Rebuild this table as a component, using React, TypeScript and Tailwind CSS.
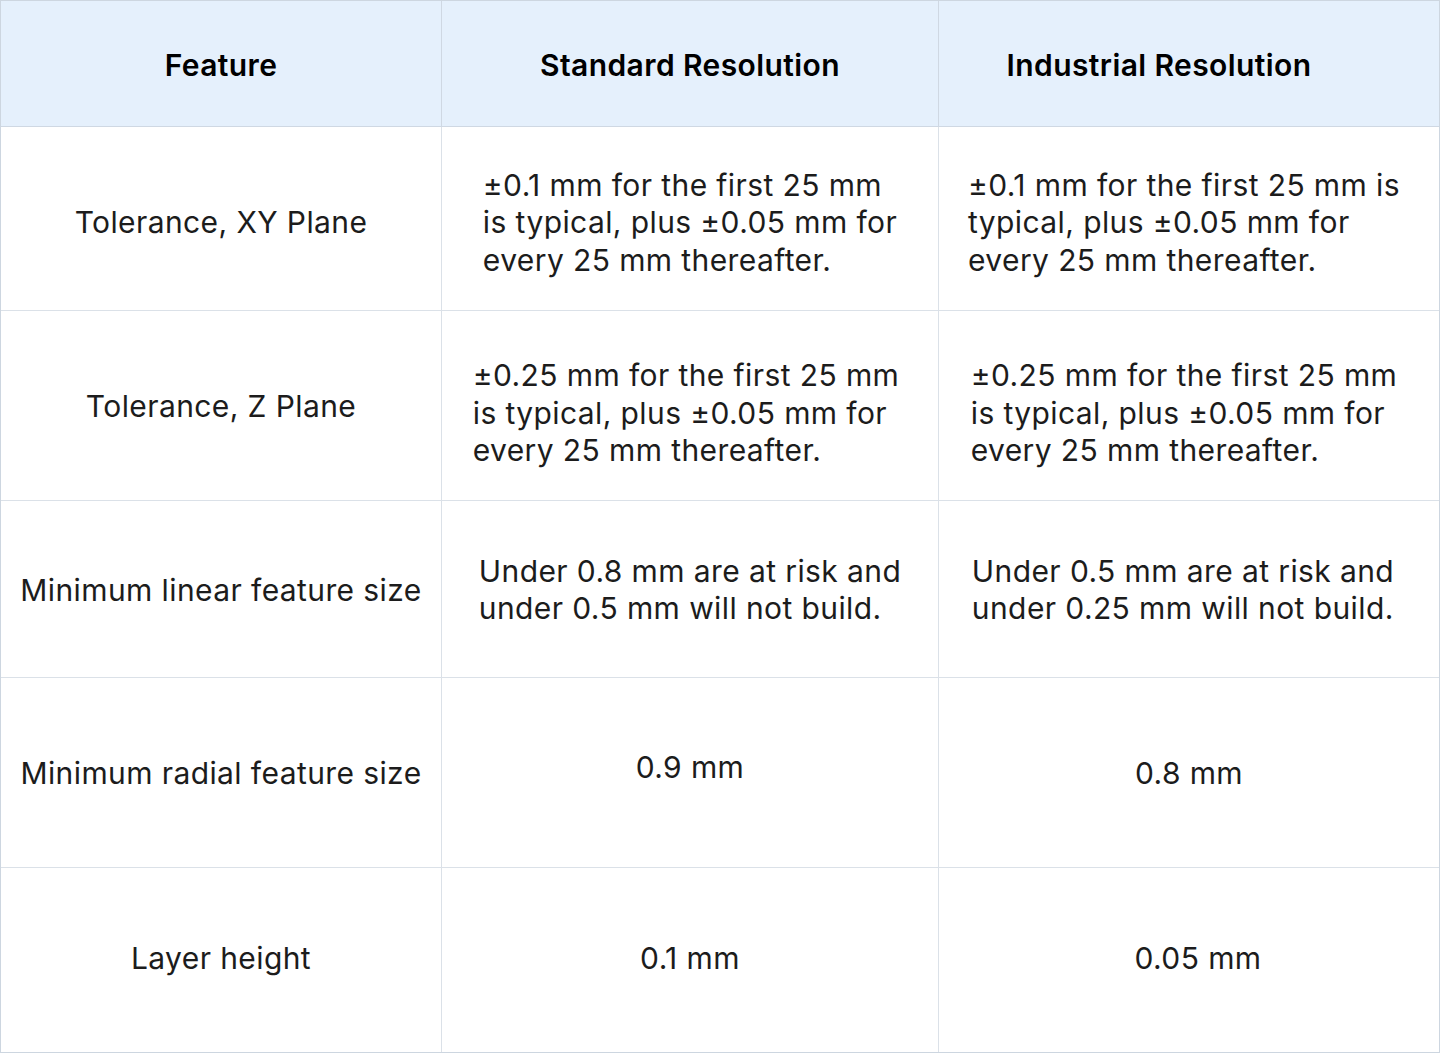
import React from "react"

type Cell = { lines: string[]; cls: string }
type Row = { feature: Cell; standard: Cell; industrial: Cell; height: string }

const rows: Row[] = [
  {
    feature: { lines: ["Tolerance, XY Plane"], cls: "pt-[8px]" },
    standard: {
      lines: ["±0.1 mm for the first 25 mm", "is typical, plus ±0.05 mm for", "every 25 mm thereafter."],
      cls: "pt-[9px]",
    },
    industrial: {
      lines: ["±0.1 mm for the first 25 mm is", "typical, plus ±0.05 mm for", "every 25 mm thereafter."],
      cls: "pt-[9px] pr-[10px]",
    },
    height: "h-[184px]",
  },
  {
    feature: { lines: ["Tolerance, Z Plane"], cls: "pt-[2px]" },
    standard: {
      lines: ["±0.25 mm for the first 25 mm", "is typical, plus ±0.05 mm for", "every 25 mm thereafter."],
      cls: "pt-[16px] pr-[8px]",
    },
    industrial: {
      lines: ["±0.25 mm for the first 25 mm", "is typical, plus ±0.05 mm for", "every 25 mm thereafter."],
      cls: "pt-[16px] pr-[10px]",
    },
    height: "h-[190px]",
  },
  {
    feature: { lines: ["Minimum linear feature size"], cls: "pt-[4px]" },
    standard: { lines: ["Under 0.8 mm are at risk and", "under 0.5 mm will not build."], cls: "pt-[2px]" },
    industrial: { lines: ["Under 0.5 mm are at risk and", "under 0.25 mm will not build."], cls: "pt-[2px] pr-[12px]" },
    height: "h-[177px]",
  },
  {
    feature: { lines: ["Minimum radial feature size"], cls: "pt-[2px]" },
    standard: { lines: ["0.9 mm"], cls: "pb-[10px]" },
    industrial: { lines: ["0.8 mm"], cls: "pt-[2px]" },
    height: "h-[190px]",
  },
  {
    feature: { lines: ["Layer height"], cls: "pb-[2px]" },
    standard: { lines: ["0.1 mm"], cls: "pb-[2px]" },
    industrial: { lines: ["0.05 mm"], cls: "pb-[2px] pl-[18px]" },
    height: "h-[184px]",
  },
]

function Lines({ lines }: { lines: string[] }) {
  return (
    <div className="text-left">
      {lines.map((l, i) => (
        <div key={i} className="whitespace-nowrap">
          {l}
        </div>
      ))}
    </div>
  )
}

export default function App() {
  return (
    <div
      className="w-[1440px] h-[1053px] bg-white text-[#1c1c1c]"
      style={{ fontFamily: "Inter, 'Noto Sans', sans-serif" }}
    >
      <div className="border-[1.5px] border-[#cdd6e0] w-full h-full overflow-hidden">
        <div className="grid grid-cols-[441px_497px_1fr] h-[126px] bg-[#e5f0fc] border-b border-[#cfd8e3] text-[30px] tracking-[0.4px] font-semibold text-black">
          <div className="flex items-center justify-center border-r border-[#cfd8e3] pt-[4px]">Feature</div>
          <div className="flex items-center justify-center border-r border-[#cfd8e3] pt-[4px]">Standard Resolution</div>
          <div className="flex items-center justify-center pt-[4px] pr-[60px]">Industrial Resolution</div>
        </div>
        {rows.map((r, i) => (
          <div
            key={i}
            className={`grid grid-cols-[441px_497px_1fr] ${r.height} ${
              i < rows.length - 1 ? "border-b border-[#dbe1e8]" : ""
            } text-[30px] tracking-[0.4px] leading-[37.5px]`}
          >
            <div className={`flex items-center justify-center border-r border-[#dbe1e8] ${r.feature.cls}`}>
              <Lines lines={r.feature.lines} />
            </div>
            <div className={`flex items-center justify-center border-r border-[#dbe1e8] ${r.standard.cls}`}>
              <Lines lines={r.standard.lines} />
            </div>
            <div className={`flex items-center justify-center ${r.industrial.cls}`}>
              <Lines lines={r.industrial.lines} />
            </div>
          </div>
        ))}
      </div>
    </div>
  )
}
